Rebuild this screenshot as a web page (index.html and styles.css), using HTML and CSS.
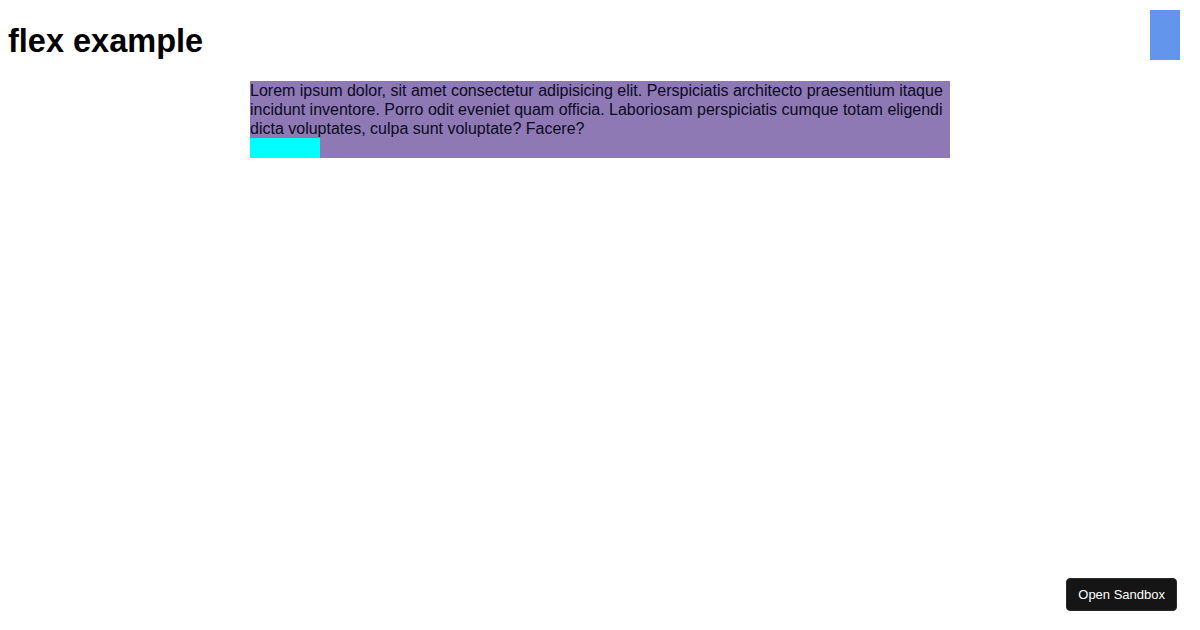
FILE: index.html
```html
<!DOCTYPE html>
<html lang="en">
    <head>
        <meta charset="UTF-8">
        <title>flex example</title>
        <link rel="stylesheet" href="styles.css">
    </head>
    <body>
        <h1>flex example</h1>
        <div class="marker"></div>

        <div class="container">
            <p class="text">Lorem ipsum dolor, sit amet consectetur adipisicing elit. Perspiciatis architecto praesentium itaque incidunt inventore. Porro odit eveniet quam officia. Laboriosam perspiciatis cumque totam eligendi dicta voluptates, culpa sunt voluptate? Facere?</p>
            <div class="item"></div>
        </div>

        <button class="sandboxBtn">Open Sandbox</button>
    </body>
</html>
```

FILE: styles.css
```css
body {
    font-family: "Liberation Sans", Arial, sans-serif;
    margin: 8px;
    background: #fff;
    color: #000;
}
h1 {
    font-size: 32.5px;
    margin: 15px 0 21px;
}
.marker {
    position: fixed;
    top: 10px;
    right: 20px;
    width: 30px;
    height: 50px;
    background-color: cornflowerblue;
}
.container {
    width: 700px;
    margin: 0 auto;
    background-color: #8e79b4;
    display: flex;
    flex-direction: column;
}
.text {
    margin: 0;
    font-size: 16px;
    line-height: 19px;
    color: #0a0a1e;
}
.item {
    width: 70px;
    height: 20px;
    background-color: cyan;
}
.sandboxBtn {
    position: fixed;
    right: 23px;
    bottom: 19px;
    padding: 8px 11px;
    font-family: "Liberation Sans", Arial, sans-serif;
    font-size: 13px;
    line-height: 15px;
    color: #fff;
    background-color: #151515;
    border: 1px solid #2a2a2a;
    border-radius: 4px;
    cursor: pointer;
}
```
